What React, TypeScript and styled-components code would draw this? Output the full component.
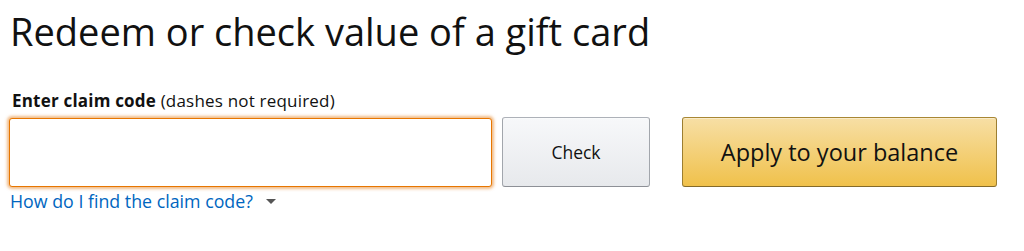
import styled, { createGlobalStyle } from "styled-components"

const GlobalStyle = createGlobalStyle`
    body {
        margin: 0;
        background: #fff;
        font-family: "Open Sans", "Liberation Sans", sans-serif;
        color: #111;
    }
`

const Page = styled.div`
    padding: 7px 0 0 10px;
`

const Title = styled.h1`
    margin: 0;
    font-size: 38px;
    font-weight: 400;
    line-height: 48px;
    color: #111;
`

const Form = styled.div`
    margin-top: 35px;
    display: flex;
    flex-direction: column;
`

const Label = styled.label`
    font-size: 17px;
    line-height: 22px;
    margin-left: 2px;
    margin-bottom: 5px;
    letter-spacing: 0.2px;
    b {
        font-weight: 700;
    }
`

const Row = styled.div`
    display: flex;
    align-items: center;
`

const CodeInput = styled.input`
    box-sizing: border-box;
    width: 483px;
    height: 69px;
    margin-left: -1px;
    border: 1px solid #e77600;
    border-radius: 3px;
    box-shadow: 0 0 3px 2px rgba(228, 121, 17, 0.5);
    outline: none;
    font-size: 18px;
    padding: 0 10px;
`

const Button = styled.button<{ $primary?: boolean }>`
    box-sizing: border-box;
    height: 70px;
    border-radius: 3px;
    font-family: inherit;
    color: #111;
    cursor: pointer;
    border: 1px solid;
    border-color: ${(p) => (p.$primary ? "#a88734 #9c7e31 #846a29" : "#adb1b8 #a2a6ac #8d9096")};
    background: ${(p) =>
        p.$primary
            ? "linear-gradient(to bottom, #f7dfa5, #f0c14b)"
            : "linear-gradient(to bottom, #f7f8fa, #e7e9ec)"};
    box-shadow: 0 1px 0 rgba(255, 255, 255, 0.4) inset;
    font-size: ${(p) => (p.$primary ? "23.5px" : "17.5px")};
    width: ${(p) => (p.$primary ? "315px" : "148px")};
    margin-left: ${(p) => (p.$primary ? "32px" : "10px")};
`

const HelpLink = styled.a`
    display: inline-flex;
    align-items: center;
    gap: 13px;
    margin-top: 3px;
    font-size: 17.8px;
    line-height: 22px;
    color: #0066c0;
    text-decoration: none;
`

const Caret = styled.span`
    width: 0;
    height: 0;
    border-left: 5px solid transparent;
    border-right: 5px solid transparent;
    border-top: 5px solid #555;
`

export default function App() {
    return (
        <Page>
            <GlobalStyle />
            <Title>Redeem or check value of a gift card</Title>
            <Form>
                <Label>
                    <b>Enter claim code</b> (dashes not required)
                </Label>
                <Row>
                    <CodeInput />
                    <Button>Check</Button>
                    <Button $primary>Apply to your balance</Button>
                </Row>
                <div>
                    <HelpLink href="#">
                        How do I find the claim code?
                        <Caret />
                    </HelpLink>
                </div>
            </Form>
        </Page>
    )
}
